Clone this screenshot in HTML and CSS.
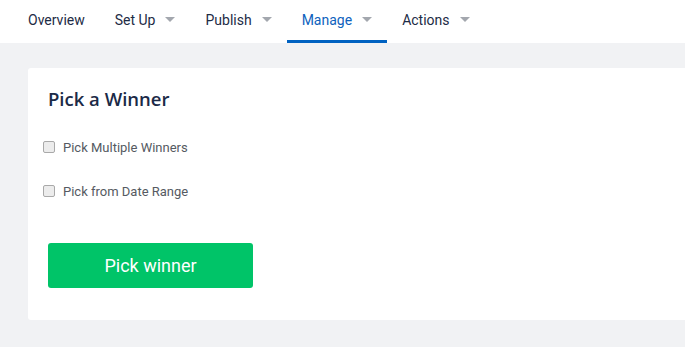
FILE: index.html
```html
<!DOCTYPE html>
<html lang="en">
<head>
    <meta charset="UTF-8">
    <meta name="viewport" content="width=device-width, initial-scale=1.0">
    <title>Pick a Winner</title>
    <link rel="stylesheet" href="styles.css">
</head>
<body>

    <!-- верхние вкладки -->
    <nav class="tabs">
        <a class="tab">Overview</a>
        <a class="tab">Set Up <span class="caret"></span></a>
        <a class="tab">Publish <span class="caret"></span></a>
        <a class="tab active">Manage <span class="caret"></span></a>
        <a class="tab">Actions <span class="caret"></span></a>
    </nav>

    <main class="page">
        <div class="card">
            <h2>Pick a Winner</h2>

            <div class="options">
                <label class="option">
                    <input type="checkbox">
                    <span>Pick Multiple Winners</span>
                </label>
                <label class="option">
                    <input type="checkbox">
                    <span>Pick from Date Range</span>
                </label>
            </div>

            <button class="pick-btn">Pick winner</button>
        </div>
    </main>

</body>
</html>
```
FILE: styles.css
```css
body {
    margin: 0;
    padding: 0;
    height: 100vh;
    overflow: hidden;
    background-color: #f1f2f4;
    font-family: Roboto, "Liberation Sans", sans-serif;
}

/* Вкладки сверху */
.tabs {
    display: flex;
    height: 43px;
    padding-left: 13px;
    background-color: #fff;
}

.tab {
    display: flex;
    align-items: center;
    gap: 10px;
    height: 43px;
    box-sizing: border-box;
    padding: 0 15px;
    padding-bottom: 1px;
    border-bottom: 3px solid transparent;
    font-size: 14px;
    color: #1d2b45;
    cursor: pointer;
}

.tab.active {
    color: #0e62bd;
    border-bottom-color: #0062c1;
}

.caret {
    width: 0;
    height: 0;
    border-left: 5px solid transparent;
    border-right: 5px solid transparent;
    border-top: 5px solid #a3a7ae;
}

.page {
    padding: 25px 0 0 28px;
}

.card {
    margin-right: -20px;
    padding: 19px 20px 32px 20px;
    background-color: #fff;
    border-radius: 3px;
}

.card h2 {
    margin: 0 0 25px 0;
    font-family: "Open Sans", sans-serif;
    font-size: 18.5px;
    line-height: 24px;
    font-weight: 600;
    color: #1b2a47;
}

.options {
    display: flex;
    flex-direction: column;
    gap: 22px;
    margin-left: -5px;
}

.option {
    display: flex;
    align-items: center;
    gap: 8px;
    height: 22px;
    font-size: 13px;
    color: #555a62;
}

.option input {
    appearance: none;
    margin: 0;
    width: 12px;
    height: 12px;
    border: 1px solid #a9a9a9;
    border-radius: 2px;
    background-color: #ececec;
}

.pick-btn {
    margin-top: 41px;
    width: 205px;
    height: 45px;
    background-color: #00c468;
    color: #fff;
    font-family: Roboto, sans-serif;
    font-size: 18px;
    border: none;
    border-radius: 3px;
    cursor: pointer;
}
```
